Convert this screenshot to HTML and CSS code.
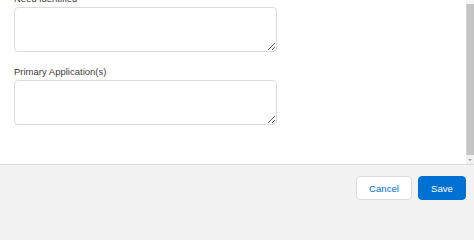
FILE: index.html
```html
<!DOCTYPE html>
<html>
<head>
<meta charset="utf-8">
<link rel="stylesheet" href="styles.css">
</head>
<body>
<div class="modal">
  <div class="body-row">
    <div class="panel">
      <div class="fields">
        <div class="field">
          <label class="label">Need identified</label>
          <textarea class="input"></textarea>
        </div>
        <div class="field">
          <label class="label">Primary Application(s)</label>
          <textarea class="input"></textarea>
        </div>
      </div>
    </div>
    <div class="scrollbar">
      <div class="track-top"></div>
      <div class="thumb"></div>
      <div class="arrow-area"><span class="arrow"></span></div>
    </div>
  </div>
  <div class="footer">
    <button class="btn btn-neutral">Cancel</button>
    <button class="btn btn-brand">Save</button>
  </div>
</div>
</body>
</html>
```
FILE: styles.css
```css
html, body {
  margin: 0;
  padding: 0;
  background: #f3f2f2;
  height: 100%;
}
body {
  overflow: hidden;
  font-family: "Liberation Sans", Arial, sans-serif;
}
.modal {
  display: flex;
  flex-direction: column;
  min-height: 100vh;
}
.body-row {
  display: flex;
  height: 164px;
  background: #ffffff;
}
.panel {
  flex: 1;
  overflow: hidden;
  background: #ffffff;
}
.fields {
  display: flex;
  flex-direction: column;
  gap: 14px;
  padding-left: 14px;
  margin-top: -7px;
}
.field {
  display: flex;
  flex-direction: column;
  gap: 2px;
}
.label {
  font-size: 9.5px;
  line-height: 12px;
  color: #3e3e3c;
  height: 12px;
}
.input {
  box-sizing: border-box;
  width: 263px;
  height: 45px;
  margin: 0;
  border: 1px solid #dddbda;
  border-radius: 4px;
  background: #ffffff;
  resize: both;
  font-family: inherit;
  font-size: 10px;
  padding: 4px 8px;
  outline: none;
}
.scrollbar {
  width: 8px;
  display: flex;
  flex-direction: column;
  background: #f1f1f1;
}
.track-top {
  height: 4px;
  background: #f5f5f5;
}
.thumb {
  height: 151px;
  background: #c4c4c4;
  border-left: 1px solid #d6d6d6;
  box-sizing: border-box;
}
.arrow-area {
  flex: 1;
  display: flex;
  justify-content: center;
  align-items: center;
}
.arrow {
  width: 0;
  height: 0;
  border-left: 2px solid transparent;
  border-right: 2px solid transparent;
  border-top: 2px solid #a3a3a3;
}
.footer {
  flex: 1;
  background: #f3f2f2;
  border-top: 1px solid #dddbda;
  display: flex;
  justify-content: flex-end;
  align-items: flex-start;
  gap: 6px;
  padding: 11px 8px 4px 0;
}
.btn {
  box-sizing: border-box;
  height: 24px;
  border-radius: 4px;
  font-family: "Liberation Sans", Arial, sans-serif;
  font-size: 9.6px;
  padding: 0;
  margin: 0;
  display: flex;
  align-items: center;
  justify-content: center;
}
.btn-neutral {
  width: 56px;
  background: #ffffff;
  border: 1px solid #dddbda;
  color: #0070d2;
}
.btn-brand {
  width: 48px;
  background: #0070d2;
  border: 1px solid #0070d2;
  color: #ffffff;
}
```
